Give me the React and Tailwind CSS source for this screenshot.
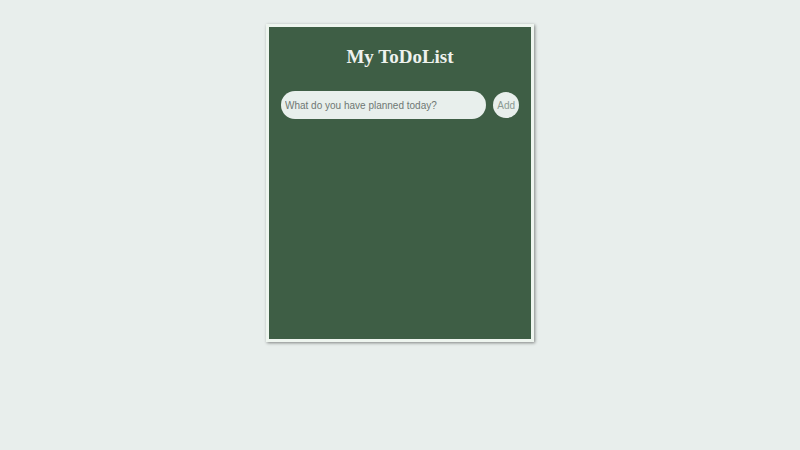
import React, { useState } from 'react';

const App = () => {
  const [task, setTask] = useState('');

  return (
    <div className="min-h-[450px] w-full bg-[#e8eeec] flex justify-center pt-6 font-['Liberation_Sans',Arial,sans-serif]">
      {/* Todo card */}
      <div className="w-[268px] h-[318px] border-[3px] border-[#eef5ef] bg-[#3e5e45] shadow-[1px_1px_3px_rgba(0,0,0,0.45)] px-3 pt-[18px]">
        <h1 className="text-center text-[19px] leading-6 font-bold text-[#eef2ee] font-['Liberation_Serif','Times_New_Roman',serif]">
          My ToDoList
        </h1>

        <div className="flex items-center gap-[7px] mt-[22px]">
          <input
            value={task}
            onChange={e => setTask(e.target.value)}
            placeholder="What do you have planned today?"
            className="w-[207px] h-[28px] rounded-full bg-[#e8efec] px-1 text-[10px] text-[#333] placeholder:text-[#6f7773] outline-none font-['Liberation_Sans',Arial,sans-serif]"
          />
          <button className="w-[26px] h-[26px] rounded-full bg-[#e8efec] text-[10px] text-[#8b9a93] flex items-center justify-center font-['Liberation_Sans',Arial,sans-serif]">
            Add
          </button>
        </div>
      </div>
    </div>
  );
};

export default App;
